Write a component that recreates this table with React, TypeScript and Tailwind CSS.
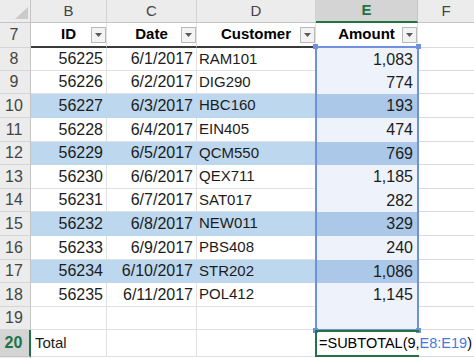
import React from "react";

type Row = { n: number; id: string; date: string; cust: string; amt: string; band: boolean };

const rows: Row[] = [
  { n: 8, id: "56225", date: "6/1/2017", cust: "RAM101", amt: "1,083", band: false },
  { n: 9, id: "56226", date: "6/2/2017", cust: "DIG290", amt: "774", band: false },
  { n: 10, id: "56227", date: "6/3/2017", cust: "HBC160", amt: "193", band: true },
  { n: 11, id: "56228", date: "6/4/2017", cust: "EIN405", amt: "474", band: false },
  { n: 12, id: "56229", date: "6/5/2017", cust: "QCM550", amt: "769", band: true },
  { n: 13, id: "56230", date: "6/6/2017", cust: "QEX711", amt: "1,185", band: false },
  { n: 14, id: "56231", date: "6/7/2017", cust: "SAT017", amt: "282", band: false },
  { n: 15, id: "56232", date: "6/8/2017", cust: "NEW011", amt: "329", band: true },
  { n: 16, id: "56233", date: "6/9/2017", cust: "PBS408", amt: "240", band: false },
  { n: 17, id: "56234", date: "6/10/2017", cust: "STR202", amt: "1,086", band: true },
  { n: 18, id: "56235", date: "6/11/2017", cust: "POL412", amt: "1,145", band: false },
  { n: 19, id: "", date: "", cust: "", amt: "", band: false },
];

// rows don't all come out the same height in the capture
const tall = [false, false, true, true, false, true, false, true, true, false, true, false];

const cols = [
  { l: "B", w: "w-[76px]" },
  { l: "C", w: "w-[90px]" },
  { l: "D", w: "w-[119px]" },
];

const FilterButton = () => (
  <span className="absolute right-0 top-[4px] flex h-[16px] w-[15px] items-center justify-center border border-[#b9b9b9] bg-[#f3f3f3]">
    <svg width="7" height="4" viewBox="0 0 7 4">
      <path d="M0 0h7L3.5 4z" fill="#5a5a5a" />
    </svg>
  </span>
);

const RowHead = ({ n }: { n?: number }) => (
  <div className="flex w-[31px] shrink-0 items-center justify-center border-r border-b border-r-[#c4c4c4] border-b-[#d6d6d6] bg-[#ececec] pr-[2px] text-[16px] text-[#444]">
    {n}
  </div>
);

export default function App() {
  return (
    <div className="relative h-[358px] w-[474px] overflow-hidden bg-white font-['Liberation_Sans',Arial,sans-serif] text-[#1c1c1c]">
      {/* column letters */}
      <div className="flex h-[23px]">
        <div className="relative w-[31px] shrink-0 border-r border-b border-[#c4c4c4] bg-[#ececec]">
          <svg className="absolute left-[15px] top-[7px]" width="13" height="12" viewBox="0 0 13 12">
            <path d="M13 0V12H0Z" fill="#cacaca" />
          </svg>
        </div>
        {cols.map((c) => (
          <div
            key={c.l}
            className={`${c.w} flex shrink-0 items-center justify-center border-r border-b border-r-[#d2d2d2] border-b-[#c4c4c4] bg-[#ececec] text-[15px] text-[#444]`}
          >
            {c.l}
          </div>
        ))}
        <div className="flex w-[102px] shrink-0 items-center justify-center border-r border-b-2 border-r-[#c4c4c4] border-b-[#217346] bg-[#d4d4d4] text-[15px] font-bold text-[#217346]">
          E
        </div>
        <div className="flex flex-1 items-center justify-center border-b border-[#c4c4c4] bg-[#ececec] text-[15px] text-[#444]">
          F
        </div>
      </div>

      {/* table header row */}
      <div className="flex h-[25px]">
        <RowHead n={7} />
        {["ID", "Date", "Customer"].map((h, i) => (
          <div
            key={h}
            className={`${cols[i].w} relative flex shrink-0 items-center justify-center border-r border-b-2 border-r-[#e0e0e0] border-b-[#3a3a3a] text-[15px] font-bold text-black`}
          >
            {h}
            <FilterButton />
          </div>
        ))}
        <div className="relative flex w-[102px] shrink-0 items-center justify-center border-r border-b-2 border-r-[#e0e0e0] border-b-[#3a3a3a] text-[15px] font-bold text-black">
          Amount
          <FilterButton />
        </div>
        <div className="flex-1 border-b border-[#dadada]" />
      </div>

      {/* data rows */}
      {rows.map((r, i) => {
        const h = tall[i] ? "h-[24px]" : "h-[23px]";
        const cell = r.band
          ? "border-r border-b border-[#bdd7ee] bg-[#bdd7ee]"
          : "border-r border-b border-[#e1e1e1] bg-white";
        const sel = r.band ? "bg-[#abc8e9]" : "bg-[#edf2fb]";
        return (
          <div key={r.n} className={`flex ${h}`}>
            <RowHead n={r.n} />
            <div className={`flex w-[76px] shrink-0 items-center justify-end pr-[3px] text-[16px] ${cell}`}>{r.id}</div>
            <div className={`flex w-[90px] shrink-0 items-center justify-end pr-[3px] text-[16px] ${cell}`}>{r.date}</div>
            <div className={`flex w-[119px] shrink-0 items-center pl-[2px] text-[15px] ${cell}`}>{r.cust}</div>
            <div className={`flex w-[102px] shrink-0 items-center justify-end pr-[5px] text-[16px] ${sel}`}>{r.amt}</div>
            <div className="flex-1 border-b border-[#dadada]" />
          </div>
        );
      })}

      {/* total row */}
      <div className="flex h-[27px]">
        <div className="flex w-[31px] shrink-0 items-center justify-center border-r-2 border-b border-r-[#217346] border-b-[#c4c4c4] bg-[#d4d4d4] pr-[2px] text-[16px] font-bold text-[#217346]">
          20
        </div>
        <div className="flex w-[76px] shrink-0 items-center border-r border-b border-[#e1e1e1] pl-[4px] text-[15px]">Total</div>
        <div className="w-[90px] shrink-0 border-r border-b border-[#e1e1e1]" />
        <div className="w-[119px] shrink-0 border-r border-b border-[#e1e1e1]" />
        <div className="relative flex w-[102px] shrink-0 items-center pl-[3px]">
          <span className="relative z-20 whitespace-nowrap bg-white text-[14.5px] text-black">
            =SUBTOTAL(9,<span className="text-[#4a78d6]">E8:E19</span>)
          </span>
        </div>
        <div className="flex-1 border-b border-[#dadada]" />
      </div>
      <div className="flex h-[24px]">
        <RowHead />
      </div>

      {/* referenced range E8:E19 */}
      <div className="pointer-events-none absolute left-[315px] top-[46px] h-[285px] w-[104px] border-2 border-[#6f90dd]">
        <span className="absolute -left-[4px] -top-[4px] h-[5px] w-[5px] bg-[#6f90dd]" />
        <span className="absolute -right-[4px] -top-[4px] h-[5px] w-[5px] bg-[#6f90dd]" />
        <span className="absolute -bottom-[4px] -left-[4px] h-[5px] w-[5px] bg-[#6f90dd]" />
        <span className="absolute -bottom-[4px] -right-[4px] h-[5px] w-[5px] bg-[#6f90dd]" />
      </div>

      {/* active cell E20 in edit mode */}
      <div className="pointer-events-none absolute left-[315px] top-[330px] z-10 h-[27px] w-[104px] border-t-2 border-b-2 border-l-2 border-[#217346]" />
    </div>
  );
}
